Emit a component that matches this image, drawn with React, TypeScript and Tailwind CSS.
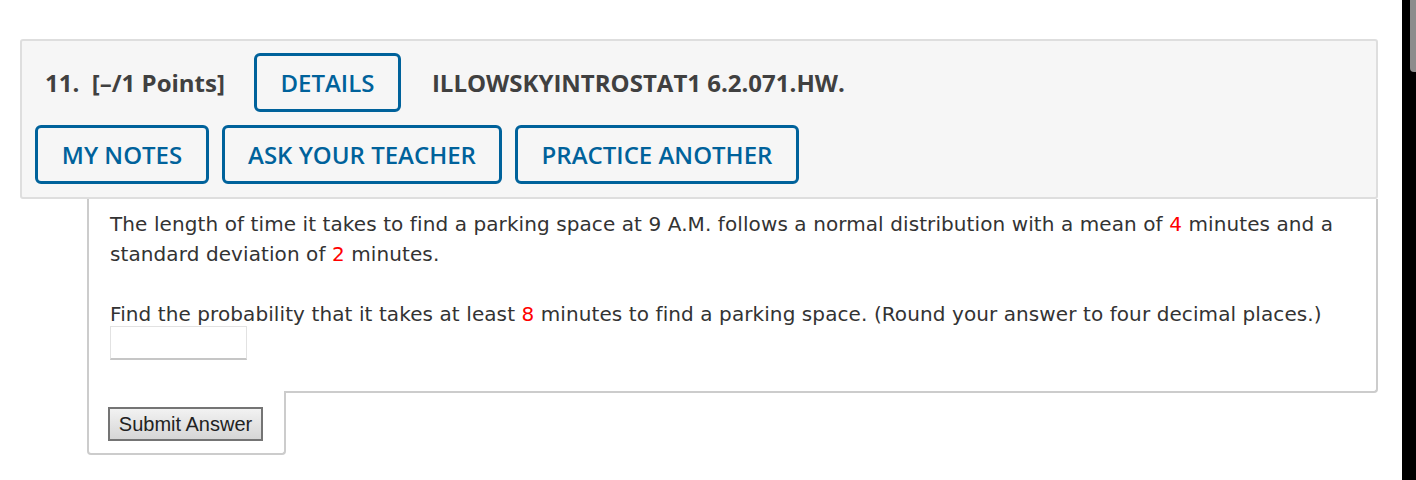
import React from "react";

const blueBtn =
  "h-[59px] border-[3px] border-[#00629b] rounded-[6px] text-[#00629b] text-[24px] font-semibold flex items-center justify-center bg-transparent";

export default function App() {
  return (
    <div className="h-[480px] w-[1416px] bg-white flex overflow-hidden">
      <div className="flex-1 pt-[39px] pl-[20px] pr-[24px]">
        {/* Header panel */}
        <div
          className="border-2 border-[#dedede] bg-[#f6f6f6] rounded-[3px] pt-[12px] pb-[13px]"
          style={{ fontFamily: "'Open Sans', 'Liberation Sans', sans-serif" }}
        >
          <div className="flex items-center pl-[23px] h-[59px]">
            <span className="text-[24px] font-bold text-[#404040] whitespace-pre">
              11.  [–/1 Points]
            </span>
            <button className={`${blueBtn} ml-[29px] w-[147px]`}>DETAILS</button>
            <span className="ml-[31px] text-[24px] font-bold text-[#404040]">
              ILLOWSKYINTROSTAT1 6.2.071.HW.
            </span>
          </div>
          <div className="flex items-center gap-[13px] pl-[13px] mt-[13px]">
            <button className={`${blueBtn} w-[174px]`}>MY NOTES</button>
            <button className={`${blueBtn} w-[280px]`}>ASK YOUR TEACHER</button>
            <button className={`${blueBtn} w-[284px]`}>PRACTICE ANOTHER</button>
          </div>
        </div>

        {/* Question body */}
        <div
          className="ml-[67px] border-l-2 border-r-2 border-b-2 border-[#cccccc] rounded-br-[4px] pt-[10px] pl-[21px] pb-[31px] text-[20px] leading-[30px] tracking-[0.09px] text-[#333333]"
          style={{ fontFamily: "'DejaVu Sans', Verdana, sans-serif" }}
        >
          <p>
            The length of time it takes to find a parking space at 9 A.M. follows a normal distribution
            with a mean of <span className="text-[#ff0000]">4</span> minutes and a standard deviation of{" "}
            <span className="text-[#ff0000]">2</span> minutes.
          </p>
          <p className="mt-[30px]">
            Find the probability that it takes at least <span className="text-[#ff0000]">8</span> minutes
            to find a parking space. (Round your answer to four decimal places.)
          </p>
          <div className="-mt-[3px]">
            <input
              type="text"
              className="block w-[137px] h-[34px] bg-white border border-[#e2e2e2] border-b-2 border-b-[#c6c6c6] outline-none"
            />
          </div>
        </div>

        {/* Submit tab */}
        <div className="relative ml-[67px] w-[199px] -mt-[2px] bg-white border-l-2 border-r-2 border-b-2 border-[#cccccc] rounded-b-[4px] pt-[16px] pl-[19px] pb-[12px]">
          <button
            className="w-[155px] h-[34px] border-2 border-[#747474] bg-gradient-to-b from-[#f2f2f2] to-[#d6d6d6] text-[20px] text-[#222222] flex items-center justify-center"
            style={{ fontFamily: "'Liberation Sans', Arial, sans-serif" }}
          >
            Submit Answer
          </button>
        </div>
      </div>

      {/* Scrollbar strip */}
      <div className="w-[14px] h-full bg-black flex justify-end">
        <div className="w-[6px] h-[72px] bg-[#8c8c8c] rounded-bl-[4px]" />
      </div>
    </div>
  );
}
